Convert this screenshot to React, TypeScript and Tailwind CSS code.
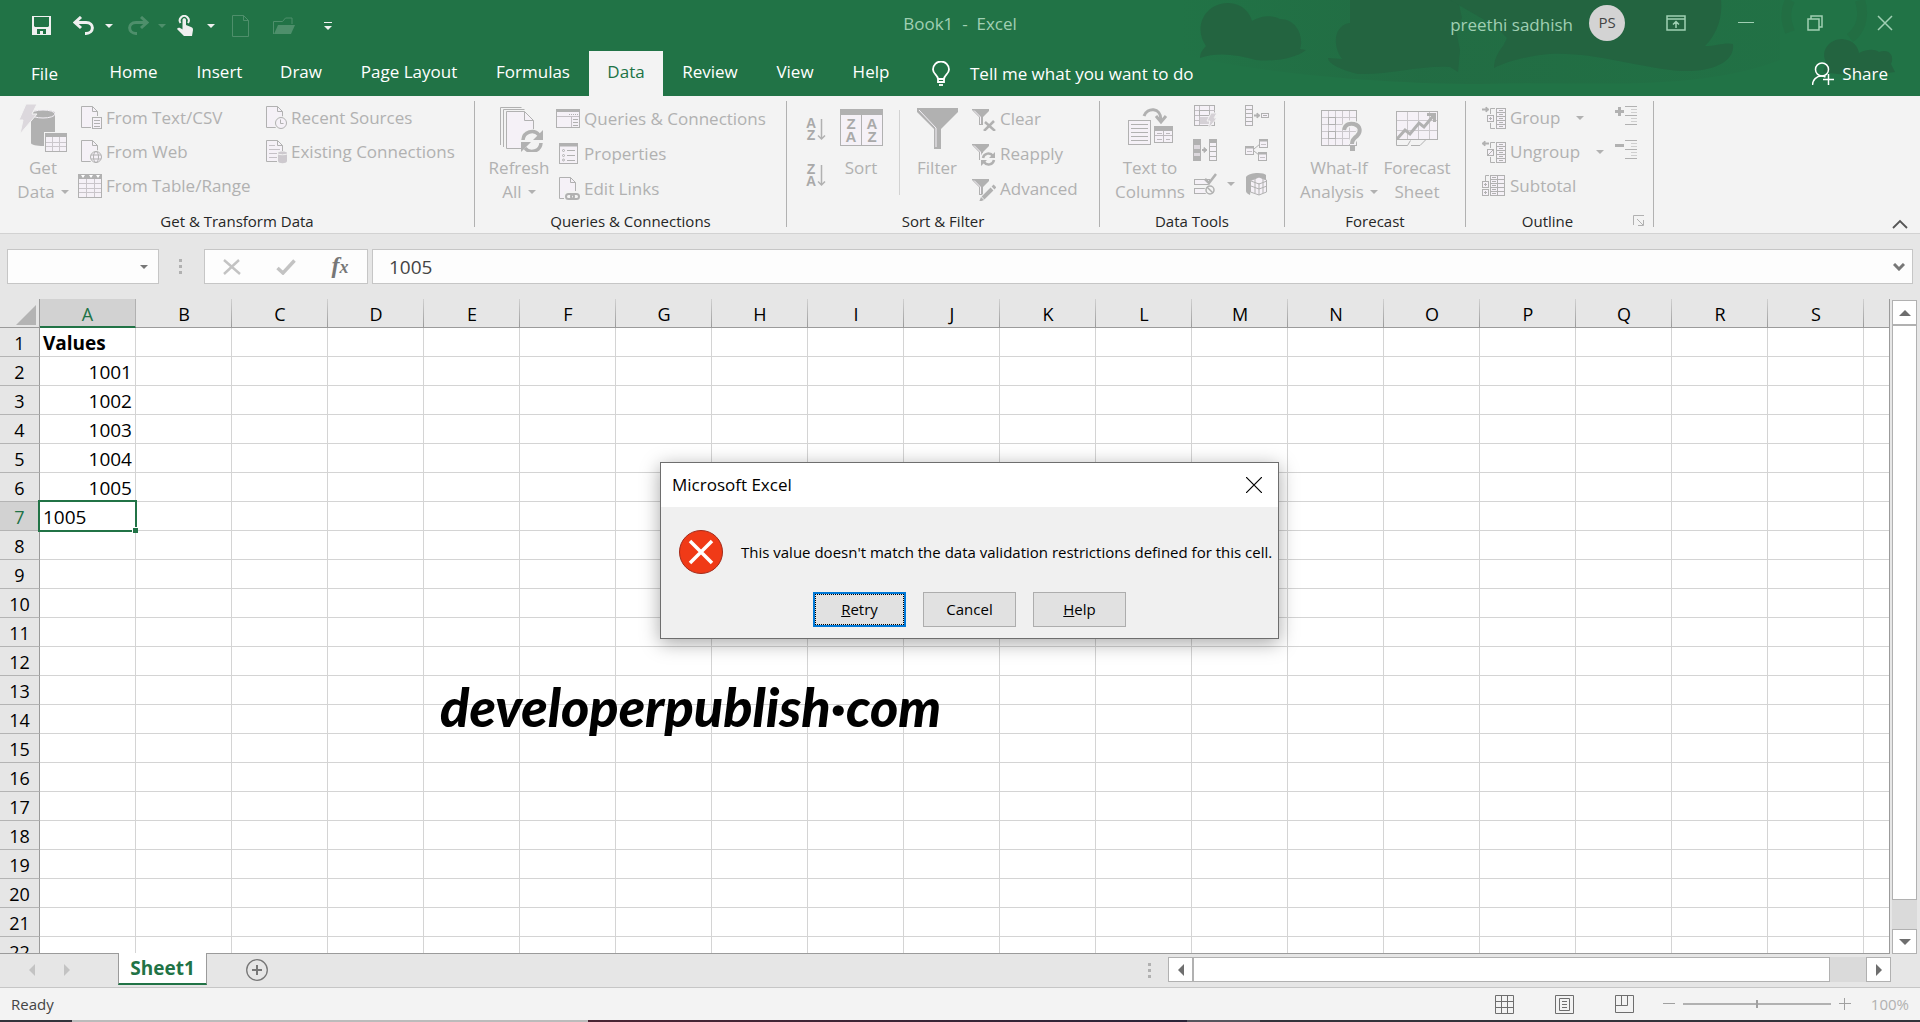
import React, { useState } from 'react';

const G = '#b1b1b1';
const F = '#f5f1f7';

const Big = ({ children }: { children: React.ReactNode }) => (
  <svg width="48" height="48" viewBox="0 0 48 48" fill="none" stroke={G} className="shrink-0">
    {children}
  </svg>
);

const Small = ({ children }: { children: React.ReactNode }) => (
  <svg width="24" height="24" viewBox="0 0 24 24" fill="none" stroke={G} className="shrink-0">
    {children}
  </svg>
);

const Caret = ({ className = '' }: { className?: string }) => (
  <svg width="8" height="4" viewBox="0 0 8 4" className={`shrink-0 ${className}`}>
    <path d="M0 0h8L4 4z" fill="currentColor" />
  </svg>
);

/* ---------- large ribbon icons ---------- */

const GetDataIcon = () => (
  <Big>
    <path d="M12 9c0-4 24-4 24 0v30c0 4-24 4-24 0z" fill={G} stroke="none" />
    <ellipse cx="24" cy="10" rx="12" ry="4" fill={G} stroke={F} />
    <path d="M7 0h11l-5 10h5L1 30l3-14H0z" fill="#dcd8dd" stroke="#f3f3f3" strokeWidth="1" />
    <rect x="25" y="28" width="23" height="20" fill="#f3f3f3" stroke="none" />
    <rect x="26.5" y="29.5" width="21" height="18" fill={F} />
    <path d="M26 31h22" strokeWidth="4" />
    <path d="M33.5 33v14M40.5 33v14M27 38.5h20M27 42.5h20" stroke="#cbc7cc" />
  </Big>
);

const RefreshAllIcon = () => (
  <Big>
    <path d="M5.5 41V3.5h21M8.5 43V5.5h21" />
    <path d="M11.5 7.5h18l9 9v28h-27z" fill={F} />
    <path d="M29.5 7.5v9h9" />
    <circle cx="37" cy="37" r="12" fill="#f3f3f3" stroke="none" />
    <path d="M28 36a9 9 0 0 1 16-5M46 39a9 9 0 0 1-16 5" strokeWidth="3.5" />
    <path d="M48 26v10H38zM26 48V38h10z" fill={G} stroke="none" />
  </Big>
);

const SortIcon = () => (
  <Big>
    <rect x="3.5" y="5.5" width="42" height="36" fill={F} />
    <path d="M3 8h43" strokeWidth="6" />
    <path d="M24.5 11v31" />
    <g fill="#a9a9a9" stroke="none" fontFamily="Liberation Sans, sans-serif" fontSize="15" fontWeight="700" textAnchor="middle">
      <text x="14" y="25">Z</text>
      <text x="14" y="38">A</text>
      <text x="35" y="25">A</text>
      <text x="35" y="38">Z</text>
    </g>
  </Big>
);

const FilterIcon = () => (
  <Big>
    <path d="M4 4h41v4L28 25v20h-7V25L4 8z" fill={G} stroke="none" />
    <path d="M6 6l17 18v19" stroke={F} />
  </Big>
);

const TextColumnsIcon = () => (
  <Big>
    <rect x="2.5" y="16.5" width="22" height="24" fill={F} />
    <path d="M5 20.5h17M5 24.5h17M5 28.5h17M5 32.5h17M5 36.5h17" />
    <path d="M18 12c3-9 17-9 17 4" strokeWidth="3" />
    <path d="M30 12l5 6 5-6" strokeWidth="3" />
    <rect x="28.5" y="22.5" width="18" height="16" fill={F} />
    <path d="M28 24.5h19" strokeWidth="5" />
    <path d="M37.5 27v11M31 29.5h5M40 29.5h4M29 31.5h17M31 35.5h5M40 35.5h4" stroke="#bdbabd" />
  </Big>
);

const WhatIfIcon = () => (
  <Big>
    <rect x="6.5" y="6.5" width="35" height="35" fill={F} />
    <path d="M13.5 7v34M20.5 7v34M27.5 7v34M34.5 7v34M7 13.5h34M7 20.5h34M7 27.5h34M7 34.5h34" stroke="#cbc8cc" />
    <rect x="13.5" y="13.5" width="7" height="7" />
    <rect x="13.5" y="27.5" width="7" height="7" />
    <path d="M29 26c1-6 6-7 10-6 7 2 7 8 3 12-3 2-5 4-5 8" stroke="#f3f3f3" strokeWidth="7" />
    <path d="M29 26c1-6 6-7 10-6 7 2 7 8 3 12-3 2-5 4-5 8" strokeWidth="4" />
    <path d="M35 42h5v5h-5z" fill={G} stroke="none" />
  </Big>
);

const ForecastIcon = () => (
  <Big>
    <rect x="3.5" y="7.5" width="41" height="28" fill={F} />
    <path d="M14.5 8v27M25.5 8v27M36.5 8v27M4 16.5h40M4 26.5h40" stroke="#cbc8cc" />
    <path d="M3.5 36v5.5h11l3-5M18 41.5h9l6-6" />
    <path d="M4 35l8-9 5 4 9-11 5 4 10-12" strokeWidth="3" />
    <path d="M34 10.5h7.5V18" strokeWidth="3" />
  </Big>
);

/* ---------- small ribbon icons ---------- */

const pageOutline = (
  <>
    <path d="M3.5.5h11l5 5v16h-16z" fill={F} />
    <path d="M14.5.5v5h5" />
  </>
);

const TextCsvIcon = () => (
  <Small>
    {pageOutline}
    <rect x="13" y="10" width="11" height="14" fill="#f3f3f3" stroke="none" />
    <rect x="14.5" y="11.5" width="9" height="11" fill={F} />
    <path d="M16 14.5h6M16 17.5h6M16 20.5h6" />
  </Small>
);

const WebIcon = () => (
  <Small>
    {pageOutline}
    <circle cx="18" cy="17" r="7" fill="#f3f3f3" stroke="none" />
    <circle cx="18" cy="17" r="5.5" fill={F} />
    <ellipse cx="18" cy="17" rx="2.5" ry="5.5" />
    <path d="M13 15h10M13 19h10" />
  </Small>
);

const TableRangeIcon = () => (
  <Small>
    <rect x=".5" y=".5" width="23" height="23" fill={F} />
    <path d="M0 2.5h24" strokeWidth="5" />
    <path d="M8.5 5v18M16.5 5v18M1 9.5h22M1 14.5h22M1 18.5h22" stroke="#c9c5ca" />
    <path d="M3 1h4L5 4zM11 1h4l-2 3zM18 1h4l-2 3z" fill="#fff" stroke="none" />
  </Small>
);

const RecentIcon = () => (
  <Small>
    {pageOutline}
    <circle cx="18" cy="17" r="7" fill="#f3f3f3" stroke="none" />
    <circle cx="18" cy="17" r="5.5" fill={F} />
    <path d="M17.5 13.5v4h3" />
  </Small>
);

const ExistingIcon = () => (
  <Small>
    {pageOutline}
    <path d="M6 5.5h6M6 9.5h11M6 13.5h9M6 17.5h8" stroke="#c5c1c6" />
    <path d="M14 11h11v13H14z" fill="#f3f3f3" stroke="none" />
    <path d="M15 13c0-2 9-2 9 0v8c0 3-9 3-9 0z" fill="#cdc9ce" stroke="none" />
    <path d="M15 14c2 1 7 1 9 0" stroke="#f3f3f3" />
  </Small>
);

const QueriesIcon = () => (
  <Small>
    <rect x=".5" y="2.5" width="23" height="18" fill={F} />
    <path d="M0 3.5h24" strokeWidth="3" />
    <path d="M1 9.5h22M15.5 10v10" stroke="#c5c1c6" />
    <path d="M13 7.5h9" strokeDasharray="1 1" />
    <path d="M17 12.5h5M17 15.5h5M17 18.5h5" />
  </Small>
);

const PropertiesIcon = () => (
  <Small>
    <rect x="3.5" y="1.5" width="18" height="20" fill={F} />
    <path d="M3 3h19" strokeWidth="3" />
    <circle cx="7.5" cy="8.5" r="1" />
    <circle cx="7.5" cy="13.5" r="1" />
    <circle cx="7.5" cy="18" r="1" />
    <path d="M11 8.5h8M11 13.5h8M11 18.5h8" />
  </Small>
);

const EditLinksIcon = () => (
  <Small>
    {pageOutline}
    <path d="M8 14h16v10H8z" fill="#f3f3f3" stroke="none" />
    <rect x="10" y="17" width="8" height="5" rx="2.5" strokeWidth="2" />
    <rect x="15" y="17" width="8" height="5" rx="2.5" strokeWidth="2" />
  </Small>
);

const smallFunnel = (
  <>
    <path d="M0 2h17v2l-6 6v8H7v-8L0 3z" fill={G} stroke="none" />
    <path d="M2 3.5l6.500 6.500v7" stroke={F} />
  </>
);

const ClearIcon = () => (
  <Small>
    {smallFunnel}
    <path d="M13 15l10 9M22 14l-10 10" strokeWidth="2.5" />
  </Small>
);

const ReapplyIcon = () => (
  <Small>
    {smallFunnel}
    <circle cx="16" cy="17" r="8" fill="#f3f3f3" stroke="none" />
    <path d="M11 16a5.500 5.500 0 0 1 10-2M22 18a5.500 5.500 0 0 1-10 2" strokeWidth="2.5" />
    <path d="M23 10v6h-6zM9 24v-6h6z" fill={G} stroke="none" />
  </Small>
);

const AdvancedIcon = () => (
  <Small>
    {smallFunnel}
    <path d="M11 21L22 10" stroke="#f3f3f3" strokeWidth="6" />
    <path d="M11 21l9-9M21 11l2-2" strokeWidth="4" />
    <path d="M7 25l2-5 3 3z" fill={G} stroke="none" />
  </Small>
);

const SortArrow = ({ top, bottom }: { top: string; bottom: string }) => (
  <svg width="22" height="24" viewBox="0 0 22 24" fill="none" stroke={G} className="overflow-visible">
    <g fill="#a9a9a9" stroke="none" fontFamily="Liberation Sans, sans-serif" fontSize="14" fontWeight="700" textAnchor="middle">
      <text x="6" y="11">{top}</text>
      <text x="6" y="23">{bottom}</text>
    </g>
    <path d="M16.5 2v20M13 18.5l3.5 3.5 3.5-3.5" strokeWidth="1.5" />
  </svg>
);

const FlashFillIcon = () => (
  <Small>
    <rect x="1.5" y="1.5" width="20" height="20" fill={F} />
    <path d="M6.5 2v19M16.5 2v5M2 6.5h20M2 11.5h20M2 16.5h5" stroke="#c2bfc3" />
    <rect x="6.5" y="6.5" width="10" height="5" />
    <path d="M7 13h9v7H7z" fill="#d5d1d6" stroke="none" />
    <path d="M18 9h6l-3 5h3l-9 11 2-8h-3z" fill="#d5d1d6" stroke="#f3f3f3" />
  </Small>
);

const DuplicatesIcon = () => (
  <Small>
    <rect x=".5" y="1.5" width="7" height="21" fill={G} />
    <path d="M1 7h6v4H1zM1 15h6v3H1z" fill="#dcd8dd" stroke="none" />
    <path d="M9 12h4" strokeWidth="2" />
    <path d="M11 9.5l3 2.500-3 2.500z" fill={G} />
    <rect x="16.5" y="1.5" width="7" height="21" fill={F} />
    <path d="M16 3h8" strokeWidth="4" />
    <path d="M17 8.5h6M17 13.5h6M17 18.5h6" />
  </Small>
);

const ValidationIcon = () => (
  <Small>
    <rect x="1.5" y="7.5" width="15" height="5" fill={F} />
    <rect x="1.5" y="16.5" width="15" height="5" fill={F} />
    <path d="M12 7l4 4 7-9" strokeWidth="2.5" />
    <circle cx="17" cy="18" r="5.5" fill="#f3f3f3" stroke="none" />
    <circle cx="17" cy="18" r="4" strokeWidth="1.5" />
    <path d="M14 15l6 6" strokeWidth="1.5" />
  </Small>
);

const ConsolidateIcon = () => (
  <Small>
    <rect x=".5" y="1.5" width="7" height="20" fill={F} />
    <path d="M1 5.5h6M1 9.5h6M1 13.5h6M1 17.5h6" />
    <path d="M9 11.5h4" strokeWidth="2" />
    <path d="M12 9l3 2.500-3 2.500z" fill={G} />
    <rect x="16.5" y="9.5" width="7" height="4" fill={F} />
    <path d="M18 11.5h4" />
  </Small>
);

const RelationshipsIcon = () => (
  <Small>
    <path d="M9 11l6-5M9 13l5 4" />
    <rect x=".5" y="8.5" width="8" height="8" fill={F} />
    <rect x="14.5" y="1.5" width="8" height="8" fill={F} />
    <rect x="13.5" y="14.5" width="8" height="8" fill={F} />
    <path d="M0 9.5h9M14 2.5h9M13 15.5h9" strokeWidth="2" />
    <path d="M2 13.5h5M16 6.5h5M15 19.5h5" stroke="#c5c1c6" />
  </Small>
);

const DataModelIcon = () => (
  <Small>
    <path d="M1 5c3-5 18-5 20-2v5H7L5 23c-3-1-4-3-4-4z" fill={G} stroke="none" />
    <path d="M5.5 8.5L14 5l7.500 3v12L14 23l-8.500-3z" fill={F} />
    <path d="M14 11v12M6 9l8 3 8-3M6 14l8 3 8-3M10 7v14M18 7v14" />
  </Small>
);

const groupCells = (
  <>
    <rect x="14.5" y="2.5" width="9" height="20" fill={F} />
    <path d="M15 6.5h8M15 10.5h8M15 14.5h8M15 18.5h8M17 4.5h4M17 8.5h4M17 12.5h4M17 16.5h4M17 20.5h4" />
    <path d="M13 2.5H8.5V8M13 22.5H8.5V17" />
    <rect x="5.5" y="9.5" width="6" height="6" fill={F} />
  </>
);

const GroupIcon = () => (
  <Small>
    {groupCells}
    <path d="M7 12.5h3M8.5 11v3" />
    <path d="M0 3.5h4" strokeWidth="2" />
    <path d="M4 1l3 2.500L4 6z" fill={G} />
  </Small>
);

const UngroupIcon = () => (
  <Small>
    {groupCells}
    <path d="M6 15l5-5" />
    <path d="M3 3.5h4" strokeWidth="2" />
    <path d="M3 1L0 3.5 3 6z" fill={G} />
  </Small>
);

const SubtotalIcon = () => (
  <Small>
    <rect x="8.5" y="1.5" width="14" height="20" fill={F} />
    <path d="M15.5 2v20M9 5.5h13M9 9.5h13M9 13.5h13M9 17.5h13" />
    <path d="M10 3.5h4M10 7.5h4M10 11.5h4M10 15.5h4M10 19.5h4" />
    <path d="M7 1.5H3.5V7" />
    <rect x=".5" y="7.5" width="6" height="6" fill={F} />
    <rect x=".5" y="15.5" width="6" height="6" fill={F} />
    <path d="M2 10.5h3M3.5 9v3M2 18.5h3M3.5 17v3" />
  </Small>
);

const DetailIcon = ({ minus = false }: { minus?: boolean }) => (
  <Small>
    <path d="M0 6.5h9" strokeWidth="3" />
    {!minus && <path d="M4.5 2v9" strokeWidth="3" />}
    <path d="M10 1.5h12M10 10.5h12M10 19.5h12" />
    <path d="M16 4.5h6M16 7.5h6M16 13.5h6M16 16.5h6" stroke="#cfcfcf" />
  </Small>
);

/* ---------- ribbon building blocks ---------- */

interface BigButtonProps {
  icon: React.ReactNode;
  lines: string[];
  caret?: boolean;
  className: string;
}

const BigButton = ({ icon, lines, caret, className }: BigButtonProps) => (
  <button disabled className={`flex flex-col items-center pt-[3px] self-start ${className}`}>
    {icon}
    <span className="mt-1 flex flex-col">
      {lines.map((line, i) => (
        <span key={line} className="flex items-center justify-center gap-[6px] leading-6 whitespace-nowrap">
          {line}
          {caret && i === lines.length - 1 && <Caret />}
        </span>
      ))}
    </span>
  </button>
);

interface RowButtonProps {
  icon: React.ReactNode;
  label: string;
  caret?: boolean;
  tall?: boolean;
}

const RowButton = ({ icon, label, caret, tall }: RowButtonProps) => (
  <button disabled className={`flex items-center gap-1 whitespace-nowrap ${tall ? 'h-[35px]' : 'h-[34px]'}`}>
    {icon}
    <span>{label}</span>
    {caret && <Caret className="ml-3" />}
  </button>
);

interface RibbonGroupProps {
  label: string;
  className: string;
  children: React.ReactNode;
  launcher?: boolean;
}

const RibbonGroup = ({ label, className, children, launcher }: RibbonGroupProps) => (
  <section className={`flex h-[126px] shrink-0 flex-col border-r border-[#b1b1b1] ${className}`}>
    <div className="flex h-[110px] shrink-0">{children}</div>
    <div className="flex h-5 shrink-0 items-center">
      <h2 className="flex-1 text-center text-[15px] leading-5 text-[#262626]">{label}</h2>
      {launcher && (
        <button aria-label="Outline settings" className="mr-1 flex w-5 justify-center">
          <svg width="12" height="12" viewBox="0 0 12 12" fill="none" stroke="#b1b1b1">
            <path d="M.5 10V.5H11M4 4l6 6M5 10.5h5.5V5" />
          </svg>
        </button>
      )}
    </div>
  </section>
);

const tabs = [
  ['Home', 'w-[89px]'],
  ['Insert', 'w-[83px]'],
  ['Draw', 'w-[80px]'],
  ['Page Layout', 'w-[136px]'],
  ['Formulas', 'w-[112px]'],
  ['Data', 'w-[74px]'],
  ['Review', 'w-[94px]'],
  ['View', 'w-[76px]'],
  ['Help', 'w-[76px]'],
];

const TitleBar = () => (
  <div className="relative flex h-[51px] items-center justify-between text-[#a0cfb3]">
    <div className="flex items-center pl-8">
      <button aria-label="Save" className="w-[41px]">
        <svg width="19" height="19" viewBox="0 0 19 19">
          <path d="M0 0h19v19H0z" fill="#f0f0f0" />
          <path d="M2 1h15v9l-1 1H3l-1-1zM5 13h9v5h-3v-3H8v3H5z" fill="#217346" />
        </svg>
      </button>
      <button aria-label="Undo" className="w-8">
        <svg width="22" height="20" viewBox="0 0 22 20" fill="none" stroke="#f0f0f0" strokeWidth="3">
          <path d="M8 1L2 6.5 8 12M2 6.5h11c9 0 8 11 0 11h-1" />
        </svg>
      </button>
      <Caret className="text-[#f0f0f0]" />
      <button aria-label="Redo" className="ml-[14px] w-[31px]">
        <svg width="22" height="20" viewBox="0 0 22 20" fill="none" stroke="#4e8f6b" strokeWidth="3">
          <path d="M14 1l6 5.500-6 5.500M20 6.5H9c-9 0-8 11 0 11h1" />
        </svg>
      </button>
      <Caret className="text-[#4e8f6b]" />
      <button aria-label="Touch mode" className="ml-[11px] w-[30px]">
        <svg width="16" height="22" viewBox="0 0 16 22">
          <path d="M3.5 8A4.500 4.500 0 1 1 11 8" fill="none" stroke="#f0f0f0" strokeWidth="2" />
          <path d="M5.5 5c0-2.500 3.500-2.500 3.500 0v5l5 2c1.500.5 2 1 2 3l-1 6H7l-7-7c1-2 3-1.500 5.500.5z" fill="#f0f0f0" />
        </svg>
      </button>
      <Caret className="text-[#f0f0f0]" />
      <button aria-label="New" className="ml-[17px] w-[41px]">
        <svg width="18" height="22" viewBox="0 0 18 22" fill="none" stroke="#4e8f6b">
          <path d="M.5.5h11l5 5v16H.5zM11.5.5v5h5" />
        </svg>
      </button>
      <button aria-label="Open" className="w-[51px]">
        <svg width="22" height="18" viewBox="0 0 22 18" fill="none" stroke="#4e8f6b">
          <path d="M.5 17V4.5h9l3-3.500h6.500v6" />
          <path d="M5 8h17l-4 9H1z" fill="#4e8f6b" stroke="none" />
        </svg>
      </button>
      <button aria-label="Customize toolbar">
        <svg width="8" height="8" viewBox="0 0 8 8" fill="#f0f0f0">
          <path d="M0 0h8v1H0zM0 4h8L4 8z" />
        </svg>
      </button>
    </div>
    <h1 className="absolute left-1/2 -mt-1 -translate-x-1/2 text-[17px] leading-6 whitespace-pre">Book1  -  Excel</h1>
    <div className="-mt-[6px] flex items-center">
      <span className="mt-1 text-[17px] leading-6">preethi sadhish</span>
      <span className="mr-4 ml-4 flex h-9 w-9 items-center justify-center rounded-full bg-[#d3d3d3] text-[15px] text-[#444]">PS</span>
      <button aria-label="Ribbon display options" className="flex h-9 w-[70px] items-center justify-center">
        <svg width="20" height="16" viewBox="0 0 20 16" fill="none" stroke="currentColor" strokeWidth="1.5">
          <path d="M1 1h18v14H1zM1 4h18M10 13V7M7 9.5L10 6.5l3 3" />
        </svg>
      </button>
      <button aria-label="Minimize" className="flex h-9 w-[69px] items-center justify-center">
        <span className="h-px w-4 bg-[#a0cfb3]" />
      </button>
      <button aria-label="Restore" className="flex h-9 w-[70px] items-center justify-center">
        <svg width="16" height="16" viewBox="0 0 16 16" fill="none" stroke="currentColor" strokeWidth="1.5">
          <path d="M1 4h11v11H1zM4 4V1h11v11h-3" />
        </svg>
      </button>
      <button aria-label="Close" className="flex h-9 w-[70px] items-center justify-center">
        <svg width="16" height="16" viewBox="0 0 16 16" stroke="currentColor" strokeWidth="1.5">
          <path d="M1 1l14 14M15 1L1 15" />
        </svg>
      </button>
    </div>
  </div>
);

const Backdrop = () => (
  <svg width="760" height="96" viewBox="1160 0 760 96" className="absolute top-0 right-0" fill="#236440">
    <defs>
      <linearGradient id="haze" x1="0" x2="1" y1="0" y2="0">
        <stop offset="0" stopColor="#236440" stopOpacity="0" />
        <stop offset="0.4" stopColor="#236440" stopOpacity="0.45" />
        <stop offset="1" stopColor="#236440" stopOpacity="0.15" />
      </linearGradient>
    </defs>
    <path d="M1180 0h600v60c-90 34-200 20-300 24-90 0-220-10-300-30z" fill="url(#haze)" />
    <path d="M1200 58c0-5 3-9 6-12-12-16-4-42 22-43 14 0 22 10 24 18 14-8 24-4 28-2 18 0 24 20 20 30l6 1c-10 8-30 12-50 10-20-6-40-8-56-2z" />
    <path d="M1350 0h108l4 18-6 12 4 20-2 22-8-5c-30-2-60 8-92 7-16-4-30-10-30-16l14 1c-10-14-8-34 8-36z" />
    <path d="M1450 0h271c2 20-6 36-16 46 12 0 20-4 28-2 2 18-20 28-52 27-40-3-90-20-132-17-22 2-44 8-55 14 0-8 4-16 9-22l4-8-12-12z" />
    <path d="M1826 62c-6-12 4-23 16-23 12 1 16 8 17 14 8-4 16-4 20-1 10-4 16 4 12 12l4 8c-24 4-50 4-72 0z" />
    <path d="M1790 0c-6 12-4 22 0 32M1860 0c6 20-2 32-10 38" fill="none" stroke="#236440" strokeOpacity="0.3" strokeWidth="10" />
  </svg>
);

const TabBar = () => (
  <div className="relative flex h-[45px] text-[17px] text-white">
    <button className="w-[89px] leading-[42px]">File</button>
    <div role="tablist" className="flex">
      {tabs.map(([name, width]) => (
        <button
          key={name}
          role="tab"
          aria-selected={name === 'Data'}
          className={`pb-[3px] leading-[42px] whitespace-nowrap ${width} ${name === 'Data' ? 'bg-[#f3f3f3] text-[#217346]' : ''}`}
        >
          {name}
        </button>
      ))}
    </div>
    <button className="ml-[23px] flex items-center gap-5 leading-[42px]">
      <svg width="18" height="25" viewBox="0 0 18 25" fill="none" stroke="#fff" strokeWidth="1.8">
        <path d="M6 18c0-4-5-5-5-9.500a8 8 0 0 1 16 0c0 4.500-5 5.500-5 9.500zM6 18v3h6v-3" />
        <path d="M7 24h4" />
      </svg>
      Tell me what you want to do
    </button>
    <button className="mr-8 ml-auto flex items-center gap-2 leading-[44px]">
      <svg width="22" height="24" viewBox="0 0 22 24" fill="none" stroke="#fff" strokeWidth="1.5">
        <circle cx="10" cy="7.5" r="6.5" />
        <path d="M.5 23c0-5 4-9 9-9 2 0 3 .5 4 1M16.5 12v11M11 17.5h11" />
      </svg>
      Share
    </button>
  </div>
);

const Ribbon = () => (
  <div className="relative flex h-[138px] shrink-0 border-b border-[#d2d2d2] bg-[#f3f3f3] pt-[5px] text-[17px] text-[#b1b1b1]">
    <RibbonGroup label="Get & Transform Data" className="w-[475px]">
      <BigButton icon={<GetDataIcon />} lines={['Get', 'Data']} caret className="ml-[10px] w-[66px]" />
      <div className="ml-[2px] w-[185px]">
        <RowButton icon={<TextCsvIcon />} label="From Text/CSV" />
        <RowButton icon={<WebIcon />} label="From Web" />
        <RowButton icon={<TableRangeIcon />} label="From Table/Range" />
      </div>
      <div>
        <RowButton icon={<RecentIcon />} label="Recent Sources" />
        <RowButton icon={<ExistingIcon />} label="Existing Connections" />
      </div>
    </RibbonGroup>
    <RibbonGroup label="Queries & Connections" className="w-[312px]">
      <BigButton icon={<RefreshAllIcon />} lines={['Refresh', 'All']} caret className="ml-[14px] w-[60px]" />
      <div className="ml-[7px]">
        <RowButton icon={<QueriesIcon />} label="Queries & Connections" tall />
        <RowButton icon={<PropertiesIcon />} label="Properties" tall />
        <RowButton icon={<EditLinksIcon />} label="Edit Links" tall />
      </div>
    </RibbonGroup>
    <RibbonGroup label="Sort & Filter" className="w-[313px]">
      <div className="ml-[18px] flex w-[31px] flex-col gap-[22px] pt-4">
        <button disabled aria-label="Sort A to Z"><SortArrow top="A" bottom="Z" /></button>
        <button disabled aria-label="Sort Z to A"><SortArrow top="Z" bottom="A" /></button>
      </div>
      <BigButton icon={<SortIcon />} lines={['Sort']} className="w-[50px]" />
      <div className="mt-[9px] ml-[13px] h-[85px] w-px bg-[#d2d2d2]" />
      <BigButton icon={<FilterIcon />} lines={['Filter']} className="ml-3 w-[50px]" />
      <div className="ml-[10px]">
        <RowButton icon={<ClearIcon />} label="Clear" tall />
        <RowButton icon={<ReapplyIcon />} label="Reapply" tall />
        <RowButton icon={<AdvancedIcon />} label="Advanced" tall />
      </div>
    </RibbonGroup>
    <RibbonGroup label="Data Tools" className="w-[185px]">
      <BigButton icon={<TextColumnsIcon />} lines={['Text to', 'Columns']} className="ml-[14px] w-[72px]" />
      <div className="ml-[7px] flex w-[52px] flex-col gap-[10px] pt-[3px]">
        <button disabled aria-label="Flash Fill"><FlashFillIcon /></button>
        <button disabled aria-label="Remove Duplicates"><DuplicatesIcon /></button>
        <button disabled aria-label="Data Validation" className="flex items-center gap-[10px]"><ValidationIcon /><Caret /></button>
      </div>
      <div className="flex flex-col gap-[10px] pt-[3px]">
        <button disabled aria-label="Consolidate"><ConsolidateIcon /></button>
        <button disabled aria-label="Relationships"><RelationshipsIcon /></button>
        <button disabled aria-label="Manage Data Model"><DataModelIcon /></button>
      </div>
    </RibbonGroup>
    <RibbonGroup label="Forecast" className="w-[181px]">
      <BigButton icon={<WhatIfIcon />} lines={['What-If', 'Analysis']} caret className="ml-[14px] w-[80px]" />
      <BigButton icon={<ForecastIcon />} lines={['Forecast', 'Sheet']} className="ml-1 w-[68px]" />
    </RibbonGroup>
    <RibbonGroup label="Outline" className="w-[188px]" launcher>
      <div className="ml-4 w-[133px]">
        <RowButton icon={<GroupIcon />} label="Group" caret />
        <RowButton icon={<UngroupIcon />} label="Ungroup" caret />
        <RowButton icon={<SubtotalIcon />} label="Subtotal" />
      </div>
      <div className="flex flex-col gap-[10px] pt-1">
        <button disabled aria-label="Show Detail"><DetailIcon /></button>
        <button disabled aria-label="Hide Detail"><DetailIcon minus /></button>
      </div>
    </RibbonGroup>
    <button aria-label="Collapse the ribbon" className="mr-3 mb-1 ml-auto self-end">
      <svg width="16" height="10" viewBox="0 0 16 10" fill="none" stroke="#555" strokeWidth="1.8">
        <path d="M1 9l7-7 7 7" />
      </svg>
    </button>
  </div>
);

const Dots = () => (
  <span className="flex flex-col gap-[3px]">
    <i className="h-[3px] w-[3px] bg-[#b1b1b1]" />
    <i className="h-[3px] w-[3px] bg-[#b1b1b1]" />
    <i className="h-[3px] w-[3px] bg-[#b1b1b1]" />
  </span>
);

const FormulaBar = ({ value, onChange }: { value: string; onChange: (v: string) => void }) => (
  <div className="flex h-[65px] shrink-0 items-start pt-[15px] pr-[7px] pl-[7px]">
    <div className="flex h-[35px] w-[152px] items-center border border-[#c6c6c6] bg-[#fdfdfd]">
      <input aria-label="Name box" className="w-full min-w-0 flex-1 bg-transparent px-2 outline-none" />
      <button aria-label="Name list" className="mr-[10px] text-[#777]"><Caret /></button>
    </div>
    <div className="flex h-[35px] w-[45px] items-center justify-center pr-[2px]"><Dots /></div>
    <div className="mr-1 flex h-[35px] w-[164px] items-center border border-[#c6c6c6] bg-[#fdfdfd]">
      <button aria-label="Cancel entry" className="flex w-[54px] justify-center">
        <svg width="18" height="16" viewBox="0 0 18 16" stroke="#c3c3c3" strokeWidth="2.4"><path d="M1 1l16 14M16 1L1 15" /></svg>
      </button>
      <button aria-label="Enter" className="flex w-[54px] justify-center">
        <svg width="20" height="16" viewBox="0 0 20 16" fill="none" stroke="#c3c3c3" strokeWidth="3.5"><path d="M1.5 9l5.500 5L18.5 1.5" /></svg>
      </button>
      <button aria-label="Insert function" className="flex w-[54px] items-center justify-center pb-1 font-['Liberation_Serif',serif] text-[24px] leading-6 font-bold text-[#777] italic">
        f<span className="pt-1 text-[18px]">x</span>
      </button>
    </div>
    <div className="flex h-[35px] min-w-0 flex-1 items-center border border-[#c6c6c6] bg-[#fdfdfd]">
      <input
        aria-label="Formula bar"
        value={value}
        onChange={(e) => onChange(e.target.value)}
        className="min-w-0 flex-1 bg-transparent pl-4 text-[19px] leading-7 text-[#444] outline-none"
      />
      <button aria-label="Expand formula bar" className="mr-[7px]">
        <svg width="12" height="8" viewBox="0 0 12 8" fill="none" stroke="#777" strokeWidth="3"><path d="M1 1l5 5 5-5" /></svg>
      </button>
    </div>
  </div>
);

const columns = 'ABCDEFGHIJKLMNOPQRS'.split('');
const rows = Array.from({ length: 22 }, (_, i) => i + 1);
const values: Record<number, string> = { 1: 'Values', 2: '1001', 3: '1002', 4: '1003', 5: '1004', 6: '1005' };

const Sheet = ({ draft }: { draft: string }) => (
  <div className="relative min-w-0 flex-1 overflow-hidden border-r border-b border-[#9b9b9b] bg-white">
    <table className="w-full table-fixed border-separate border-spacing-0 text-[19px] text-black">
      <colgroup>
        <col className="w-10" />
        {columns.map((c) => (
          <col key={c} className="w-24" />
        ))}
        <col />
      </colgroup>
      <thead>
        <tr className="h-[29px]">
          <td className="border-r border-b border-[#9b9b9b] bg-[#e6e6e6] p-0">
            <svg width="20" height="20" viewBox="0 0 20 20" className="mt-1 ml-4"><path d="M20 0v20H0z" fill="#b4b4b4" /></svg>
          </td>
          {columns.map((c) => (
            <th
              key={c}
              scope="col"
              className={
                c === 'A'
                  ? 'border-r border-b-2 border-r-[#b1b1b1] border-b-[#217346] bg-[#d2d2d2] p-0 pt-[2px] text-[18px] leading-[22px] font-normal text-[#217346]'
                  : 'border-b border-[#9b9b9b] bg-[#e6e6e6] bg-[linear-gradient(#d0d0d0,#9b9b9b)] bg-[length:1px_100%] bg-right bg-no-repeat p-0 pt-[2px] text-[18px] leading-[23px] font-normal'
              }
            >
              {c}
            </th>
          ))}
          <td className="border-b border-[#9b9b9b] bg-[#e6e6e6] p-0" />
        </tr>
      </thead>
      <tbody>
        {rows.map((r) => (
          <tr key={r} className="h-[29px]">
            <th
              scope="row"
              className={`border-r border-b border-r-[#9b9b9b] border-b-[#b4b4b4] p-0 pt-[2px] text-[18px] leading-6 font-normal ${
                r === 7 ? 'bg-[#d2d2d2] text-[#217346]' : 'bg-[#e6e6e6]'
              }`}
            >
              {r}
            </th>
            {columns.map((c) => {
              if (c !== 'A') return <td key={c} className="border-r border-b border-[#d4d4d4] p-0" />;
              if (r === 7) {
                return (
                  <td key={c} className="relative border-r border-b border-[#d4d4d4] px-[3px] pt-[2px] pb-0 leading-6">
                    {draft}
                    <span className="absolute -inset-[2px] border-2 border-[#217346]" />
                    <span className="absolute -right-[3px] -bottom-[3px] h-[6px] w-[6px] border-t border-l border-white bg-[#217346]" />
                  </td>
                );
              }
              return (
                <td
                  key={c}
                  className={`border-r border-b border-[#d4d4d4] px-[3px] pt-[2px] pb-0 leading-6 ${r === 1 ? 'font-bold' : 'text-right'}`}
                >
                  {values[r]}
                </td>
              );
            })}
            <td className="border-b border-[#d4d4d4] p-0" />
          </tr>
        ))}
      </tbody>
    </table>
    {/* floating text box */}
    <p className="absolute top-[372px] left-[440px] font-['Lato','Open_Sans',sans-serif] text-[54px] leading-[72px] font-black whitespace-nowrap text-black italic">
      developerpublish·com
    </p>
  </div>
);

const Triangle = ({ d }: { d: string }) => (
  <svg width="12" height="12" viewBox="0 0 12 12"><path d={d} fill="currentColor" /></svg>
);

const VerticalScroll = () => (
  <div className="mr-[3px] ml-[2px] flex w-[25px] shrink-0 flex-col bg-[#dadada] text-[#6e6e6e]">
    <div className="h-px bg-[#e6e6e6]" />
    <button aria-label="Scroll up" className="flex h-[25px] shrink-0 items-center justify-center border border-[#b1b1b1] bg-white"><Triangle d="M0 9h12L6 3z" /></button>
    <div className="flex-1 border border-[#b1b1b1] bg-white" />
    <div className="h-[29px] shrink-0" />
    <button aria-label="Scroll down" className="flex h-[25px] shrink-0 items-center justify-center border border-[#b1b1b1] bg-white"><Triangle d="M0 3h12L6 9z" /></button>
  </div>
);

const SheetTabs = () => (
  <div className="flex h-[34px] shrink-0 items-start border-b border-[#c6c6c6]">
    <div className="flex h-8 w-[118px] items-center gap-[23px] pl-[26px] text-[#c3c3c3]">
      <button aria-label="Previous sheet"><Triangle d="M9 0v12L3 6z" /></button>
      <button aria-label="Next sheet"><Triangle d="M3 0v12l6-6z" /></button>
    </div>
    <button className="relative -mt-px h-8 w-[89px] border-x border-b-2 border-x-[#9b9b9b] border-b-[#217346] bg-white text-[19px] leading-[29px] font-bold text-[#217346]">
      Sheet1
    </button>
    <button aria-label="New sheet" className="mt-[5px] ml-[39px]">
      <svg width="22" height="22" viewBox="0 0 22 22" fill="none" stroke="#777">
        <circle cx="11" cy="11" r="10.3" strokeWidth="1.3" />
        <path d="M11 6v10M6 11h10" strokeWidth="2" />
      </svg>
    </button>
    <div className="ml-auto flex h-8 items-center pr-[17px]"><Dots /></div>
    <div className="mt-[3px] mr-[29px] flex h-[25px] w-[38%] max-w-[723px] bg-[#dadada] text-[#6e6e6e]">
      <button aria-label="Scroll left" className="flex w-[25px] items-center justify-center border border-[#b1b1b1] bg-white"><Triangle d="M9 0v12L3 6z" /></button>
      <div className="flex-1 border border-[#b1b1b1] bg-white" />
      <div className="w-9" />
      <button aria-label="Scroll right" className="flex w-[25px] items-center justify-center border border-[#b1b1b1] bg-white"><Triangle d="M3 0v12l6-6z" /></button>
    </div>
  </div>
);

const StatusBar = () => {
  const [zoom, setZoom] = useState(100);
  return (
    <footer className="flex h-8 shrink-0 items-center bg-[#f3f3f3] pr-[11px] pl-[11px] text-[15px] text-[#444]">
      <span>Ready</span>
      <div className="ml-auto flex items-center gap-[41px]">
        <button aria-label="Normal view">
          <svg width="19" height="19" viewBox="0 0 19 19" fill="none" stroke="#6e6e6e"><path d="M.5.5h18v18H.5zM6.5.5v18M12.5.5v18M.5 6.5h18M.5 12.5h18" /></svg>
        </button>
        <button aria-label="Page layout view">
          <svg width="19" height="19" viewBox="0 0 19 19" fill="none" stroke="#6e6e6e"><path d="M.5.5h18v18H.5zM4.5 3.5h10v12h-10zM7 6.5h5M7 9.5h5M7 12.5h5" /></svg>
        </button>
        <button aria-label="Page break preview">
          <svg width="19" height="19" viewBox="0 0 19 19" fill="none" stroke="#6e6e6e"><path d="M.5.5h18v17H.5zM6.5.5v10M12.5.5v10H.5" /></svg>
        </button>
      </div>
      <button aria-label="Zoom out" className="ml-[29px] text-[#a0a0a0]">
        <svg width="12" height="12" viewBox="0 0 12 12" stroke="currentColor"><path d="M0 5.5h12" /></svg>
      </button>
      <input
        type="range"
        aria-label="Zoom"
        min={0}
        max={200}
        value={zoom}
        onChange={(e) => setZoom(Number(e.target.value))}
        className="mx-2 h-[2px] w-[148px] appearance-none bg-[#b1b1b1] [&::-webkit-slider-thumb]:h-2 [&::-webkit-slider-thumb]:w-[2px] [&::-webkit-slider-thumb]:appearance-none [&::-webkit-slider-thumb]:bg-[#a0a0a0]"
      />
      <button aria-label="Zoom in" className="text-[#a0a0a0]">
        <svg width="12" height="12" viewBox="0 0 12 12" stroke="currentColor"><path d="M0 5.5h12M5.5 0v12" /></svg>
      </button>
      <span className="ml-[18px] w-10 text-right text-[#b1b1b1]">{zoom}%</span>
    </footer>
  );
};

const ErrorDialog = ({ onClose }: { onClose: () => void }) => (
  <div
    role="alertdialog"
    aria-labelledby="dialog-title"
    className="absolute top-[462px] left-1/2 ml-[-300px] w-[619px] border border-[#6e6e6e] bg-[#f0f0f0] pb-[11px] text-[15px] text-black shadow-[0_4px_18px_rgba(0,0,0,0.35)]"
  >
    <div className="flex h-11 items-center justify-between bg-white pr-4 pl-[11px]">
      <h2 id="dialog-title" className="text-[17px]">Microsoft Excel</h2>
      <button aria-label="Close dialog" onClick={onClose}>
        <svg width="16" height="16" viewBox="0 0 16 16" stroke="#000" strokeWidth="1.2"><path d="M0 0l16 16M16 0L0 16" /></svg>
      </button>
    </div>
    <div className="flex items-center gap-[18px] pt-[23px] pl-[18px]">
      <svg width="44" height="44" viewBox="0 0 44 44" className="shrink-0">
        <circle cx="22" cy="22" r="21.5" fill="#f03a17" stroke="#a32a1a" />
        <path d="M11 11l22 22M33 11L11 33" stroke="#fff" strokeWidth="3.5" />
      </svg>
      <p className="whitespace-nowrap">This value doesn't match the data validation restrictions defined for this cell.</p>
    </div>
    <div className="mt-[18px] flex justify-center gap-[17px]">
      <button onClick={onClose} className="h-[35px] w-[93px] border-2 border-[#0078d7] bg-[#e1e1e1]">
        <span className="flex h-full items-center justify-center border border-dotted border-black"><span><u>R</u>etry</span></span>
      </button>
      <button onClick={onClose} className="h-[35px] w-[93px] border border-[#adadad] bg-[#e1e1e1]">Cancel</button>
      <button className="h-[35px] w-[93px] border border-[#adadad] bg-[#e1e1e1]"><u>H</u>elp</button>
    </div>
  </div>
);

const App = () => {
  const [draft, setDraft] = useState('1005');
  const [showError, setShowError] = useState(true);

  return (
    <div className="relative flex h-screen flex-col overflow-hidden bg-[#e6e6e6] font-['Open_Sans',sans-serif]">
      <header className="relative shrink-0 bg-[#217346]">
        <Backdrop />
        <TitleBar />
        <TabBar />
      </header>
      <Ribbon />
      <FormulaBar value={draft} onChange={setDraft} />
      <main className="flex min-h-0 flex-1">
        <Sheet draft={draft} />
        <VerticalScroll />
      </main>
      <SheetTabs />
      <StatusBar />
      <div className="flex h-[2px] shrink-0 bg-[#33333b]">
        <div className="w-[72px]" />
        <div className="w-[516px] bg-[#bbb]" />
        <div className="w-[599px] bg-linear-to-r from-[#4a2433] to-[#2a2438]" />
        <div className="w-[73px] bg-[#55555d]" />
      </div>
      {showError && <ErrorDialog onClose={() => setShowError(false)} />}
    </div>
  );
};

export default App;
